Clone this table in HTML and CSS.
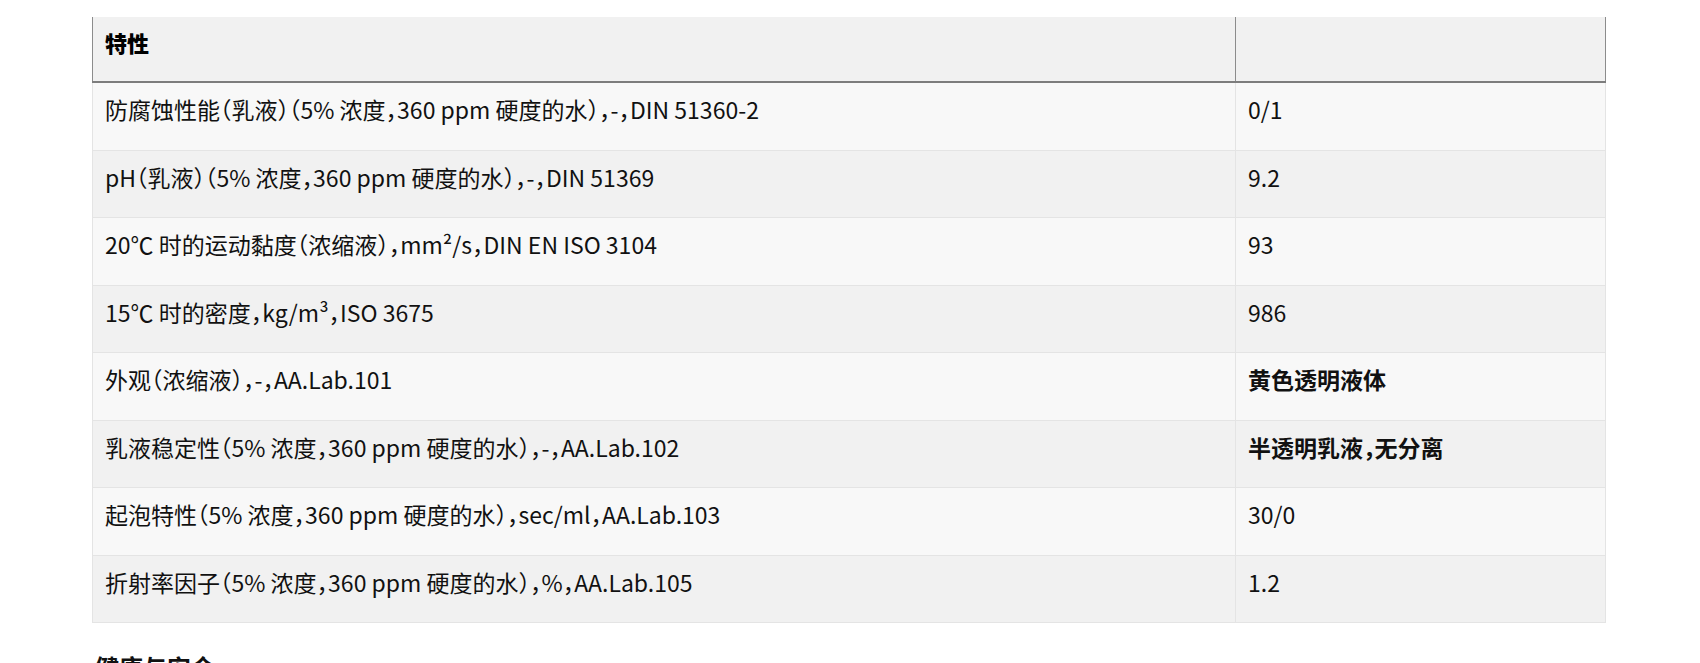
FILE: index.html
```html
<!DOCTYPE html>
<html lang="zh-CN">
<head>
<meta charset="utf-8">
<link rel="stylesheet" href="styles.css">
</head>
<body>
<div class="page">
  <table class="props">
    <thead>
      <tr><th class="c1">特性</th><th class="c2"></th></tr>
    </thead>
    <tbody>
      <tr><td>防腐蚀性能（乳液）（5% 浓度，360 ppm 硬度的水），-，DIN 51360-2</td><td>0/1</td></tr>
      <tr><td>pH（乳液）（5% 浓度，360 ppm 硬度的水），-，DIN 51369</td><td>9.2</td></tr>
      <tr><td>20℃ 时的运动黏度（浓缩液），mm²/s，DIN EN ISO 3104</td><td>93</td></tr>
      <tr><td>15℃ 时的密度，kg/m³，ISO 3675</td><td>986</td></tr>
      <tr><td>外观（浓缩液），-，AA.Lab.101</td><td class="strong">黄色透明液体</td></tr>
      <tr><td>乳液稳定性（5% 浓度，360 ppm 硬度的水），-，AA.Lab.102</td><td class="strong">半透明乳液，无分离</td></tr>
      <tr><td>起泡特性（5% 浓度，360 ppm 硬度的水），sec/ml，AA.Lab.103</td><td>30/0</td></tr>
      <tr><td>折射率因子（5% 浓度，360 ppm 硬度的水），%，AA.Lab.105</td><td>1.2</td></tr>
    </tbody>
  </table>
  <h2 class="section">健康与安全</h2>
</div>
</body>
</html>
```
FILE: styles.css
```css
html, body {
  margin: 0;
  padding: 0;
  background: #ffffff;
}
body {
  font-family: "Noto Sans CJK SC", sans-serif;
  color: #111111;
}
.page {
  padding: 17px 0 0 92px;
  width: 1514px;
}
.props {
  width: 100%;
  border-collapse: collapse;
  font-size: 23px;
  line-height: 30px;
  font-feature-settings: "halt";
}
.props th {
  background: #f1f1f1;
  text-align: left;
  font-weight: 900;
  font-size: 22px;
  color: #000000;
  padding: 10px 12px 24px;
  height: 30px;
  border-left: 1px solid #8c8c8c;
  border-right: 1px solid #8c8c8c;
  border-bottom: 2px solid #7d7d7d;
}
.props th.c1 { width: 1118px; }
.props td {
  padding: 11px 12px 25.5px;
  border: 1px solid #e4e4e4;
  vertical-align: middle;
}
.props td.strong { font-weight: 700; }
.props tbody tr:nth-child(odd) td { background: #f8f8f8; }
.props tbody tr:nth-child(even) td { background: #f1f1f1; }
.section {
  margin: 28px 0 0 3px;
  font-size: 24px;
  font-weight: 700;
  line-height: 32px;
}
```
